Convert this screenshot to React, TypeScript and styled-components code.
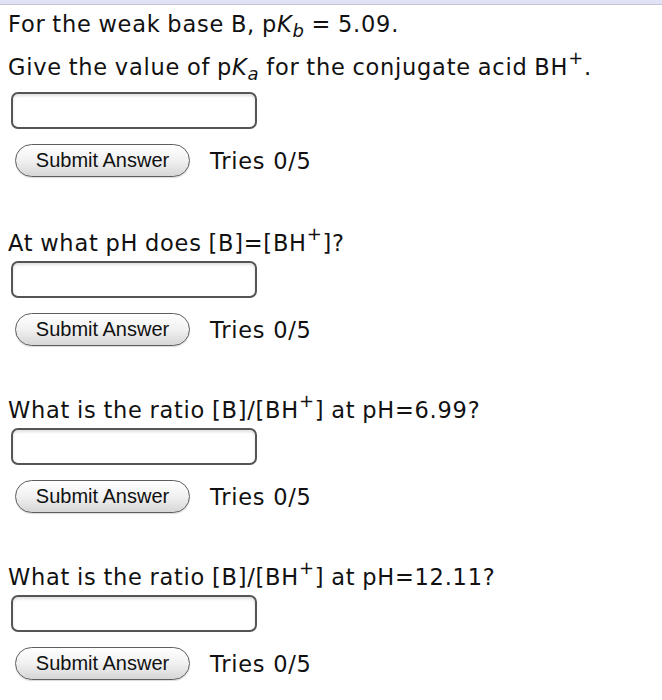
import styled, { createGlobalStyle } from 'styled-components';

const GlobalStyle = createGlobalStyle`
  html, body {
    margin: 0;
    padding: 0;
    background: #ffffff;
  }
`;

const Page = styled.div`
  width: 662px;
  height: 700px;
  overflow: hidden;
  background: #ffffff;
  font-family: 'DejaVu Sans', Verdana, sans-serif;
  color: #111111;
`;

// band at the very top
const TopBand = styled.div`
  height: 4px;
  background: #e2e2f6;
  border-bottom: 1px solid #c4c4d4;
`;

const Content = styled.div`
  display: flex;
  flex-direction: column;
  padding: 6px 0 0 8px;
`;

const Question = styled.div<{ $gapAfter: number; $gapBefore?: number }>`
  font-size: 22.5px;
  letter-spacing: 0.75px;
  word-spacing: -1px;
  line-height: 26px;
  height: 26px;
  white-space: nowrap;
  margin-top: ${(p) => p.$gapBefore ?? 0}px;
  margin-bottom: ${(p) => p.$gapAfter}px;
`;

const Ital = styled.i`
  font-style: italic;
`;

const Sub = styled.sub`
  font-size: 0.8em;
  font-style: italic;
  line-height: 0;
  vertical-align: -0.3em;
`;

const Sup = styled.sup`
  font-size: 0.8em;
  line-height: 0;
  vertical-align: 0.6em;
`;

const AnswerInput = styled.input`
  box-sizing: border-box;
  width: 246px;
  height: 37px;
  margin-left: 3px;
  border: 2px solid #555555;
  border-radius: 7px;
  background: #ffffff;
  box-shadow: inset 0 2px 3px rgba(0, 0, 0, 0.12);
  outline: none;
  padding: 0 8px;
  font-size: 18px;
`;

const SubmitRow = styled.div`
  display: flex;
  align-items: center;
  gap: 20px;
  margin-top: 15px;
  margin-left: 7px;
`;

const SubmitBtn = styled.button`
  box-sizing: border-box;
  width: 175px;
  height: 33px;
  border: 1.5px solid #5e5e5e;
  border-radius: 17px;
  background: linear-gradient(to bottom, #ffffff 0%, #f1f1f1 50%, #d6d6d6 100%);
  box-shadow: 0 1px 1px rgba(0, 0, 0, 0.15);
  font-family: 'Liberation Sans', Arial, sans-serif;
  font-size: 20px;
  color: #111111;
  padding: 0;
  cursor: pointer;
`;

const Tries = styled.span`
  font-size: 22.5px;
  letter-spacing: 0.75px;
  color: #111111;
`;

const QuestionBlock = ({
  children,
  gapBefore,
  gapAfter,
}: {
  children: React.ReactNode;
  gapBefore?: number;
  gapAfter: number;
}) => (
  <>
    <Question $gapBefore={gapBefore} $gapAfter={gapAfter}>
      {children}
    </Question>
    <AnswerInput type="text" />
    <SubmitRow>
      <SubmitBtn>Submit Answer</SubmitBtn>
      <Tries>Tries 0/5</Tries>
    </SubmitRow>
  </>
);

const App = () => {
  return (
    <Page>
      <GlobalStyle />
      <TopBand />
      <Content>
        <Question $gapAfter={17}>
          For the weak base B, p<Ital>K</Ital>
          <Sub>b</Sub> = 5.09.
        </Question>
        <QuestionBlock gapAfter={12}>
          Give the value of p<Ital>K</Ital>
          <Sub>a</Sub> for the conjugate acid BH<Sup>+</Sup>.
        </QuestionBlock>
        <QuestionBlock gapBefore={53} gapAfter={5}>
          At what pH does [B]=[BH<Sup>+</Sup>]?
        </QuestionBlock>
        <QuestionBlock gapBefore={51} gapAfter={5}>
          What is the ratio [B]/[BH<Sup>+</Sup>] at pH=6.99?
        </QuestionBlock>
        <QuestionBlock gapBefore={51} gapAfter={5}>
          What is the ratio [B]/[BH<Sup>+</Sup>] at pH=12.11?
        </QuestionBlock>
      </Content>
    </Page>
  );
};

export default App;
